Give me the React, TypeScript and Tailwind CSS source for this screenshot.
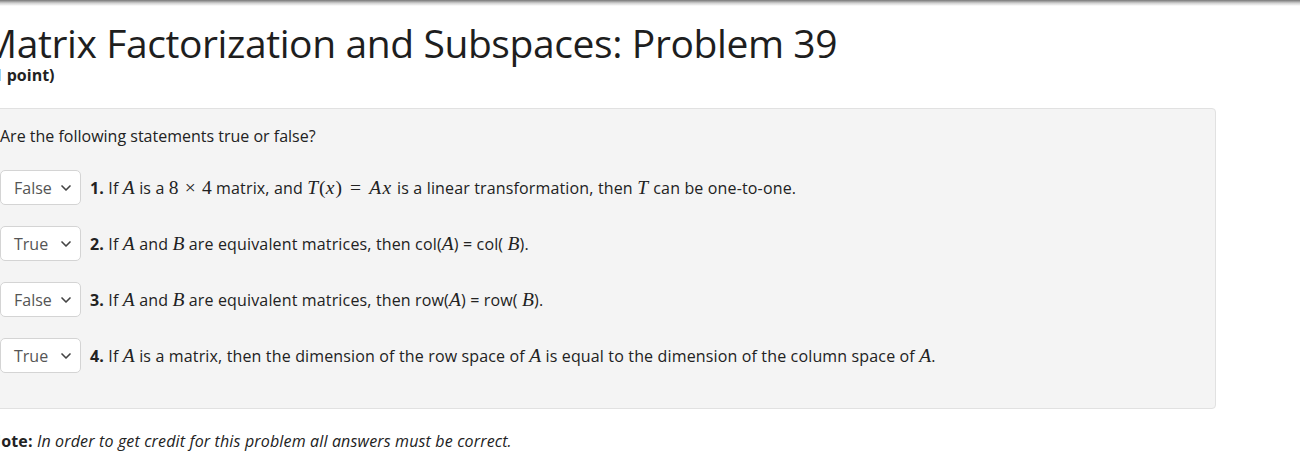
import { ChevronDown } from "lucide-react";

const sans = { fontFamily: '"Open Sans", "Noto Sans", sans-serif' };
const serif = { fontFamily: '"Liberation Serif", "DejaVu Serif", serif' };

function M({ children, className }: { children: React.ReactNode; className?: string }) {
    return (
        <span className={"italic text-[19.5px] leading-none text-[#222] " + (className ?? "")} style={serif}>
            {children}
        </span>
    );
}

function R({ children, className }: { children: React.ReactNode; className?: string }) {
    return (
        <span className={"text-[19.5px] leading-none text-[#222] " + (className ?? "")} style={serif}>
            {children}
        </span>
    );
}

function Select({ value }: { value: string }) {
    return (
        <div className="flex items-center justify-between w-[81px] h-[35px] shrink-0 bg-white border border-[#d4d4d4] rounded-[5px] pl-[13px] pr-[6px] text-[16px] text-[#555]">
            <span>{value}</span>
            <ChevronDown className="w-4 h-4 text-[#444]" strokeWidth={2.5} />
        </div>
    );
}

function Row({ value, n, children }: { value: string; n: number; children: React.ReactNode }) {
    return (
        <div className="flex items-center gap-[9px]">
            <Select value={value} />
            <p className="text-[16px] text-[#222] tracking-[0.15px]">
                <b>{n}.</b> {children}
            </p>
        </div>
    );
}

export default function App() {
    return (
        <div className="bg-white w-[1300px] h-[453px] overflow-hidden text-[#222]" style={sans}>
            <div className="h-[6px] bg-gradient-to-b from-[#777] via-[#cfcfcf] to-white" />
            <div className="-ml-[12px] w-[1228px]">
                <h1 className="mt-[15px] -ml-[6px] text-[39px] leading-[44px] font-medium text-[#1e1e1e] tracking-[-0.4px]">
                    Matrix Factorization and Subspaces: Problem 39
                </h1>
                <p className="-mt-[1px] text-[16px] font-bold leading-[22px]">(1 point)</p>

                <div className="mt-[22px] bg-[#f4f4f4] border border-[#e1e1e1] rounded-[4px] pl-[11px] pt-[15px] pb-[35px]">
                    <p className="text-[16px] leading-[24px]">Are the following statements true or false?</p>
                    <div className="mt-[22px] flex flex-col gap-[21px]">
                        <Row value="False" n={1}>
                            If <M>A</M> is a <R>8<span className="mx-[6px]">×</span>4</R> matrix, and <M className="tracking-[1px]">T</M>
                            <R>(</R>
                            <M className="tracking-[1px]">x</M>
                            <R>)</R>
                            <R className="mx-[8px]">=</R>
                            <M className="tracking-[1.5px]">Ax</M> is a linear transformation, then <M className="tracking-[1px]">T</M> can be one-to-one.
                        </Row>
                        <Row value="True" n={2}>
                            If <M>A</M> and <M>B</M> are equivalent matrices, then col(<M>A</M>) = col( <M>B</M>).
                        </Row>
                        <Row value="False" n={3}>
                            If <M>A</M> and <M>B</M> are equivalent matrices, then row(<M>A</M>) = row( <M>B</M>).
                        </Row>
                        <Row value="True" n={4}>
                            If <M>A</M> is a matrix, then the dimension of the row space of <M>A</M> is equal to the dimension
                            of the column space of <M>A</M>.
                        </Row>
                    </div>
                </div>

                <p className="mt-[20px] text-[16px] leading-[24px] tracking-[0.15px]">
                    <b>Note:</b> <i>In order to get credit for this problem all answers must be correct.</i>
                </p>
            </div>
        </div>
    );
}
